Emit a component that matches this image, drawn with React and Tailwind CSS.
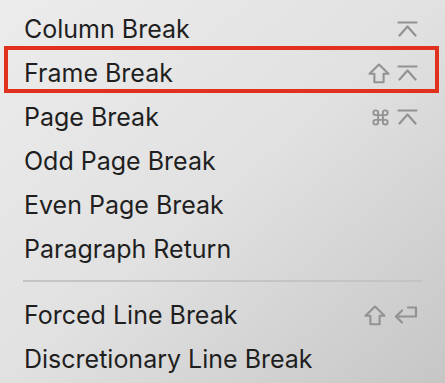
import React from 'react';

const ink = '#929292';

function KeypadEnter() {
  return (
    <svg width="21" height="16" viewBox="0 0 21 16" fill="none" stroke={ink} strokeWidth="2.2" strokeLinecap="round" strokeLinejoin="round">
      <path d="M1.5 1.5H19.5" />
      <path d="M2.5 14.5L10.5 5.5L18.5 14.5" />
    </svg>
  );
}

function Shift() {
  return (
    <svg width="22" height="21" viewBox="0 0 22 21" fill="none" stroke={ink} strokeWidth="2.1" strokeLinejoin="round">
      <path d="M11 1.5L1.5 10.8H6.4V19.3H15.6V10.8H20.5Z" />
    </svg>
  );
}

function Cmd() {
  return (
    <svg width="19" height="19" viewBox="0 0 24 24" fill="none" stroke={ink} strokeWidth="2.4" strokeLinecap="round" strokeLinejoin="round">
      <path d="M15 6v12a3 3 0 1 0 3-3H6a3 3 0 1 0 3 3V6a3 3 0 1 0-3 3h12a3 3 0 1 0-3-3" />
    </svg>
  );
}

function Return() {
  return (
    <svg width="25" height="19" viewBox="0 0 25 19" fill="none" stroke={ink} strokeWidth="2.2" strokeLinecap="round" strokeLinejoin="round">
      <path d="M15 1.5H23V10.5H3" />
      <path d="M9 4.5L3 10.5L9 16.5" />
    </svg>
  );
}

const rows = [
  { label: 'Column Break', keys: [KeypadEnter] },
  { label: 'Frame Break', keys: [Shift, KeypadEnter], boxed: true },
  { label: 'Page Break', keys: [Cmd, KeypadEnter] },
  { label: 'Odd Page Break', keys: [] },
  { label: 'Even Page Break', keys: [] },
  { label: 'Paragraph Return', keys: [] },
];

const rows2 = [
  { label: 'Forced Line Break', keys: [Shift, Return] },
  { label: 'Discretionary Line Break', keys: [] },
];

function Row({ label, keys, boxed }) {
  return (
    <div className="relative flex h-[44px] items-center justify-between pl-[24px] pr-[27px]">
      <span className="text-[25px] leading-none text-[#1f1f1f]">{label}</span>
      <span className="flex items-center gap-[7px]">
        {keys.map((K, i) => (
          <K key={i} />
        ))}
      </span>
      {boxed && (
        <div className="pointer-events-none absolute left-[4px] right-[6px] top-[-5px] bottom-[2px] border-[4px] border-[#e0301e]" />
      )}
    </div>
  );
}

export default function App() {
  return (
    <div
      className="h-[383px] w-[445px] overflow-hidden bg-linear-to-br from-[#ececec] via-[#e1e1e1] to-[#c6c6c6] pt-[7px]"
      style={{ fontFamily: 'Inter, "Noto Sans", sans-serif' }}
    >
      {rows.map((r) => (
        <Row key={r.label} {...r} />
      ))}
      <div className="mx-[23px] mt-[9px] mb-[11px] h-[2px] bg-[#c4c4c4]" />
      {rows2.map((r) => (
        <Row key={r.label} {...r} />
      ))}
    </div>
  );
}
